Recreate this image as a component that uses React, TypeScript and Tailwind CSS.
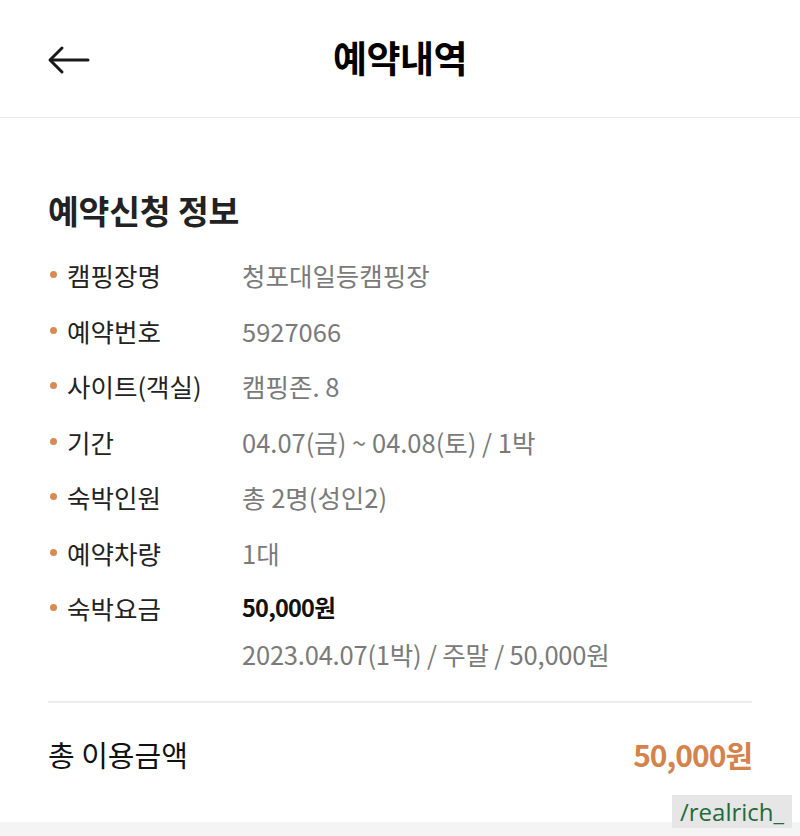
import React from "react";

const rows: { label: string; value: string; bold?: boolean; sub?: string }[] = [
  { label: "캠핑장명", value: "청포대일등캠핑장" },
  { label: "예약번호", value: "5927066" },
  { label: "사이트(객실)", value: "캠핑존. 8" },
  { label: "기간", value: "04.07(금) ~ 04.08(토) / 1박" },
  { label: "숙박인원", value: "총 2명(성인2)" },
  { label: "예약차량", value: "1대" },
  { label: "숙박요금", value: "50,000원", bold: true, sub: "2023.04.07(1박) / 주말 / 50,000원" },
];

export default function App() {
  return (
    <div
      className="relative w-[800px] h-[836px] bg-white overflow-hidden"
      style={{ fontFamily: '"Noto Sans CJK KR", "Noto Sans", sans-serif' }}
    >
      <header className="relative h-[118px] border-b border-[#e8e8e8] flex items-center justify-center">
        <button className="absolute left-[46px] top-[40px] w-[46px] h-[40px] flex items-center justify-center">
          <svg width="44" height="32" viewBox="0 0 44 32" fill="none" stroke="#1a1a1a" strokeWidth="3" strokeLinecap="round" strokeLinejoin="round">
            <path d="M41 16H4" />
            <path d="M15 4L3 16l12 12" />
          </svg>
        </button>
        <h1 className="text-[37px] font-bold text-black leading-none tracking-[-0.5px] mt-[-2px]">예약내역</h1>
      </header>

      <main className="px-12">
        <h2 className="mt-[72px] text-[33.5px] font-bold text-[#222] leading-[40px] tracking-[-0.2px]">예약신청 정보</h2>
        <ul className="mt-[17px]">
          {rows.map((r) => (
            <li key={r.label} className="flex">
              <div className="w-[194px] flex items-start shrink-0">
                <span className="h-[55.5px] flex items-center">
                  <span className="w-[7px] h-[7px] rounded-full bg-[#d98a52] ml-[2px] mr-[10px]" />
                </span>
                <span className="text-[25.5px] leading-[55.5px] text-[#222]">{r.label}</span>
              </div>
              <div className="flex flex-col">
                <span
                  className={
                    r.bold
                      ? "text-[23.5px] leading-[55.5px] font-bold text-[#111] tracking-[-0.8px]"
                      : "text-[25.5px] leading-[55.5px] text-[#7a7a7a]"
                  }
                >
                  {r.value}
                </span>
                {r.sub && (
                  <span className="text-[25.5px] leading-[40px] text-[#7a7a7a] tracking-[-0.2px] mt-[-2px]">{r.sub}</span>
                )}
              </div>
            </li>
          ))}
        </ul>
        <div className="mt-[27px] border-t-2 border-[#eeeeee]" />
        <div className="mt-[32px] flex items-center justify-between h-[40px]">
          <span className="text-[29px] text-[#111]">총 이용금액</span>
          <span className="text-[30px] font-bold text-[#d4834a] tracking-[-1px]">50,000원</span>
        </div>
      </main>

      <div className="absolute left-0 right-0 bottom-0 h-[14px] bg-[#f4f4f4]" />
      <div
        className="absolute left-[672px] top-[795px] w-[120px] h-[33px] bg-[#e6e6e6] flex items-center justify-center text-[24px] text-[#1f6b3a] leading-none"
        style={{ fontFamily: '"Open Sans", "Liberation Sans", sans-serif' }}
      >
        /realrich_
      </div>
    </div>
  );
}
